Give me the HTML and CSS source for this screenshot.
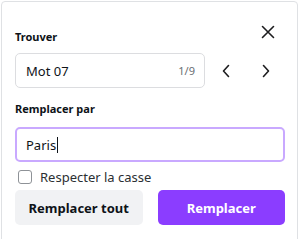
FILE: index.html
```html
<!DOCTYPE html>
<html lang="fr">
<head>
<meta charset="utf-8">
<link rel="stylesheet" href="styles.css">
</head>
<body>
<div class="panel">
  <div class="head">
    <div class="label label-find">Trouver</div>
    <button class="icon-btn close" aria-label="Fermer">
      <svg width="14" height="14" viewBox="0 0 14 14"><path d="M1.5 1.5L12.5 12.5M12.5 1.5L1.5 12.5" stroke="#1d1d1f" stroke-width="1.6" stroke-linecap="round" fill="none"/></svg>
    </button>
  </div>
  <div class="find-row">
    <div class="field find">
      <span class="value">Mot 07</span>
      <span class="count">1/9</span>
    </div>
    <button class="icon-btn nav" aria-label="Précédent">
      <svg width="10" height="14" viewBox="0 0 10 14"><path d="M7.5 1.5L2.5 7L7.5 12.5" stroke="#1d1d1f" stroke-width="1.6" stroke-linecap="round" stroke-linejoin="round" fill="none"/></svg>
    </button>
    <button class="icon-btn nav" aria-label="Suivant">
      <svg width="10" height="14" viewBox="0 0 10 14"><path d="M2.5 1.5L7.5 7L2.5 12.5" stroke="#1d1d1f" stroke-width="1.6" stroke-linecap="round" stroke-linejoin="round" fill="none"/></svg>
    </button>
  </div>
  <div class="label label-replace">Remplacer par</div>
  <div class="field replace">
    <span class="value">Paris</span><span class="caret"></span>
  </div>
  <label class="check">
    <span class="box"></span>
    <span class="check-text">Respecter la casse</span>
  </label>
  <div class="actions">
    <button class="btn secondary">Remplacer tout</button>
    <button class="btn primary">Remplacer</button>
  </div>
</div>
</body>
</html>
```

FILE: styles.css
```css
* { box-sizing: border-box; }
html, body { margin: 0; padding: 0; background: #ffffff; }
body {
  font-family: "Noto Sans", "Open Sans", sans-serif;
  color: #0e1318;
  overflow: hidden;
}
.panel {
  margin: 1px 0 0 1px;
  width: 297px;
  height: 250px;
  border: 1px solid #dfe1e4;
  border-radius: 4px;
  padding: 16px 12px 0 13px;
  background: #fff;
}
.head {
  display: flex;
  justify-content: space-between;
  align-items: flex-start;
  height: 28px;
}
.label {
  font-size: 11px;
  font-weight: 700;
  line-height: 14px;
}
.label-find { margin-top: 12px; }
.icon-btn {
  border: 0;
  background: transparent;
  padding: 0;
  display: flex;
  align-items: center;
  justify-content: center;
  font: inherit;
}
.close {
  width: 38px;
  height: 28px;
  margin-right: -2px;
}
.find-row {
  display: flex;
  align-items: center;
  margin-top: 7px;
  gap: 2px;
}
.field {
  display: flex;
  align-items: center;
  height: 35px;
  border: 1px solid #dcdde0;
  border-radius: 5px;
  padding: 0 9px 0 10px;
  font-size: 13px;
}
.find { flex: 1; }
.find .value { flex: 1; }
.count {
  font-size: 11px;
  color: #6b6f74;
}
.nav {
  width: 38px;
  height: 35px;
}
.label-replace { margin-top: 14px; }
.replace {
  margin-top: 11px;
  border: 2px solid #c9a9ff;
  padding-left: 9px;
}
.caret {
  display: inline-block;
  width: 1px;
  height: 16px;
  background: #0e1318;
  margin-left: 1px;
}
.check {
  display: flex;
  align-items: center;
  gap: 8px;
  margin-top: 8px;
  padding-left: 3px;
  height: 14px;
}
.box {
  width: 14px;
  height: 14px;
  border: 1px solid #8e9297;
  border-radius: 3px;
}
.check-text {
  font-size: 13px;
  color: #2b2f33;
}
.actions {
  display: flex;
  gap: 15px;
  margin-top: 6px;
}
.btn {
  flex: 1;
  height: 35px;
  border: 0;
  border-radius: 5px;
  font-family: inherit;
  font-size: 13px;
  font-weight: 700;
}
.secondary {
  background: #f1f2f4;
  color: #0e1318;
}
.primary {
  background: #8b3dff;
  color: #ffffff;
}
```
